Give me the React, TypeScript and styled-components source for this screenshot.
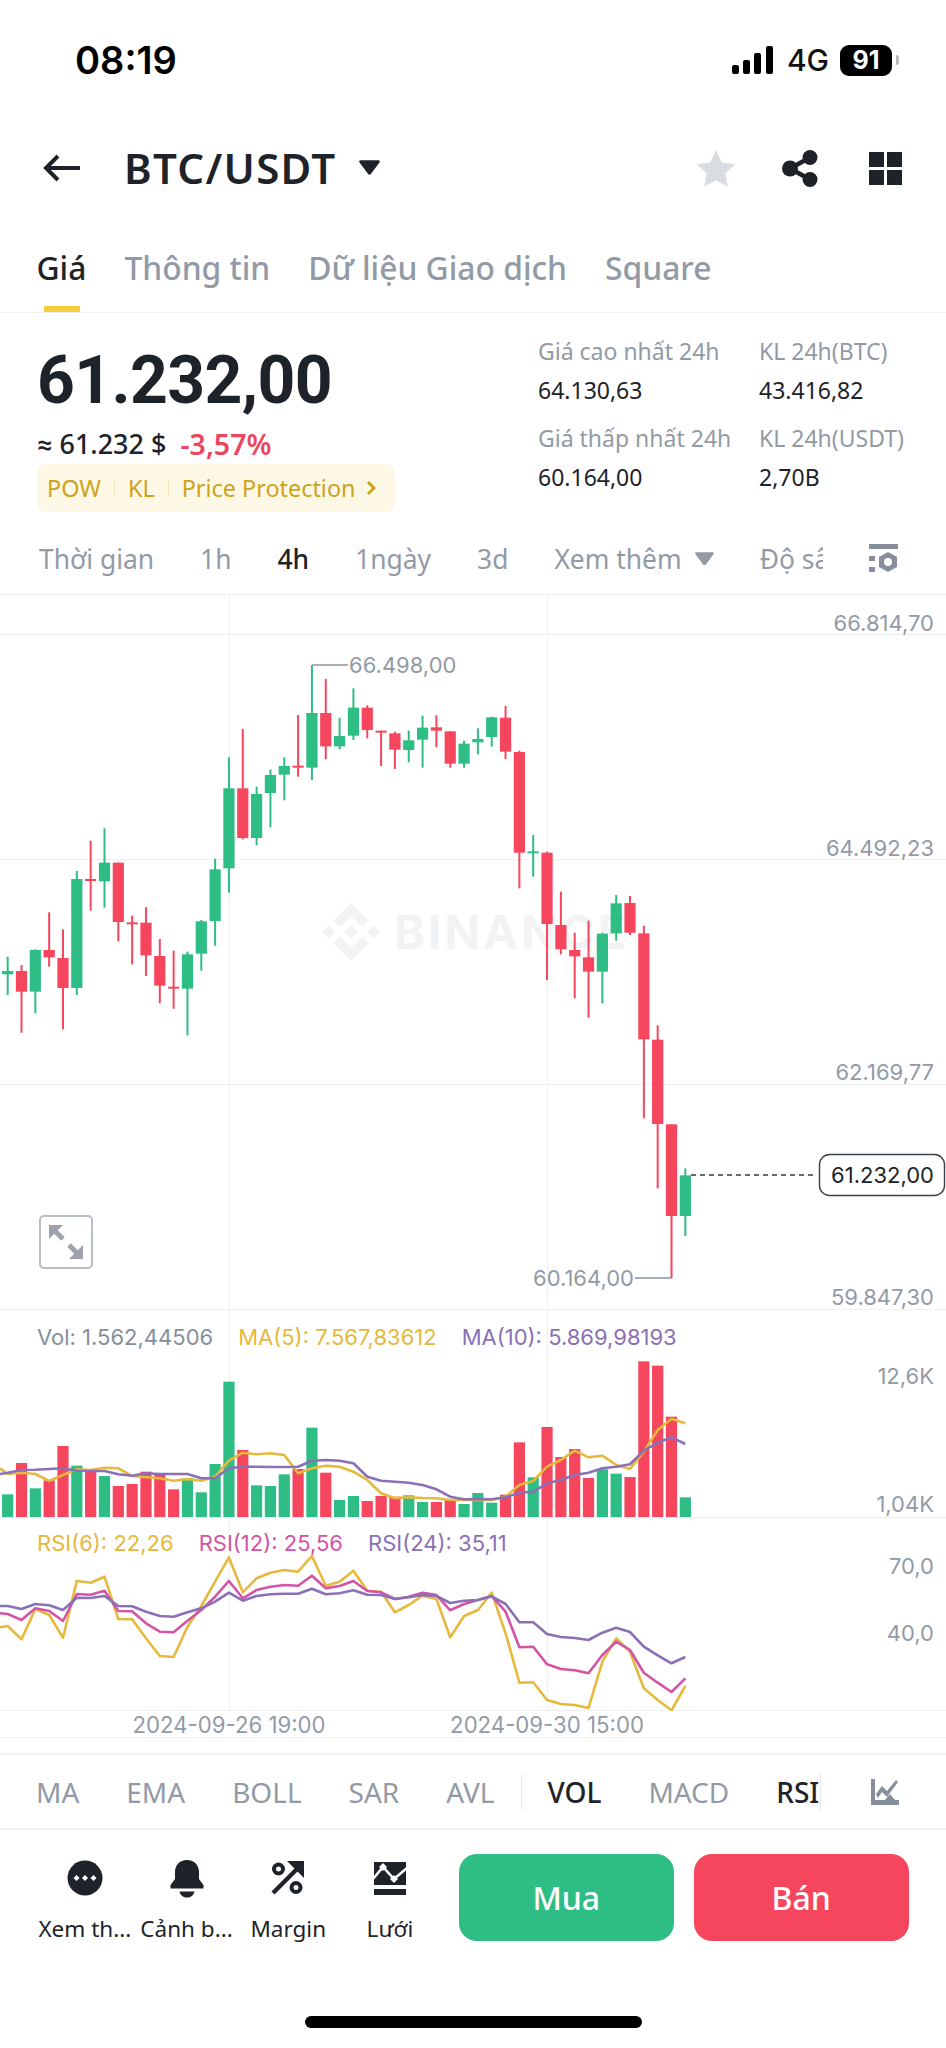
import * as React from "react";
import styled, { createGlobalStyle } from "styled-components";

const DARK = "#1e2329";
const GREY = "#929aa5";
const GREEN = "#2ebd85";
const RED = "#f6465d";
const GOLD = "#e6b83c";
const PINK = "#d154a6";
const PURPLE = "#8a70b6";
const UI_FONT = `"Noto Sans", Roboto, sans-serif`;
const CHART_FONT = `Inter, "Liberation Sans", sans-serif`;

const Global = createGlobalStyle`
html, body, #root {
  margin: 0;
  padding: 0;
  background: #fff;
}
`;

const Page = styled.div`
  width: 946px;
  height: 2048px;
  overflow: hidden;
  display: flex;
  flex-direction: column;
  background: #fff;
  color: ${DARK};
  font-family: ${UI_FONT};
`;

const StatusBar = styled.div`
  height: 120px;
  flex: none;
  display: flex;
  align-items: center;
  padding: 0 54px 0 75px;
`;

const Clock = styled.span`
  font-family: Inter, sans-serif;
  font-size: 38px;
  font-weight: 600;
  color: #000;
`;

const StatusRight = styled.div`
  margin-left: auto;
  display: flex;
  align-items: center;
`;

const Network = styled.span`
  font-family: Inter, sans-serif;
  font-size: 30px;
  font-weight: 500;
  color: #111;
  margin: 0 11px 0 13px;
`;

const Battery = styled.span`
  width: 52px;
  height: 31px;
  border-radius: 9px;
  background: #000;
  color: #fff;
  font-family: Inter, sans-serif;
  font-size: 25px;
  font-weight: 700;
  line-height: 31px;
  text-align: center;
  position: relative;
  &::after {
    content: "";
    position: absolute;
    right: -7px;
    top: 10px;
    width: 3px;
    height: 10px;
    border-radius: 0 3px 3px 0;
    background: #b5b8bc;
  }
`;

const Header = styled.div`
  height: 96px;
  flex: none;
  display: flex;
  align-items: center;
  padding: 0 44px 0 43px;
`;

const Title = styled.span`
  margin: 0 22px 0 44px;
  font-size: 42px;
  font-weight: 600;
  line-height: 48px;
  letter-spacing: 1.3px;
`;

const HeaderActions = styled.div`
  margin-left: auto;
  display: flex;
  align-items: center;
  gap: 47px;
  > :last-child {
    margin-left: 4px;
  }
`;

const Tabs = styled.div`
  height: 96px;
  flex: none;
  display: flex;
  gap: 38px;
  padding-left: 36.5px;
  border-bottom: 1px solid #eef0f2;
`;

const Tab = styled.div<{ $active?: boolean }>`
  position: relative;
  padding-top: 32px;
  font-size: 31.8px;
  line-height: 40px;
  font-weight: 500;
  color: ${(p) => (p.$active ? DARK : GREY)};
  &::after {
    content: "";
    display: ${(p) => (p.$active ? "block" : "none")};
    position: absolute;
    left: 7.5px;
    bottom: 0;
    width: 36px;
    height: 6px;
    background: #f5cf3a;
  }
`;

const Summary = styled.div`
  height: 212px;
  flex: none;
  display: flex;
`;

const PriceColumn = styled.div`
  width: 501px;
  padding-left: 37px;
  flex: none;
`;

const LastPrice = styled.div`
  margin-top: 28px;
  font-family: Roboto, sans-serif;
  font-size: 66px;
  line-height: 80px;
  font-weight: 700;
  letter-spacing: -0.6px;
`;

const SubPrice = styled.div`
  display: flex;
  gap: 14px;
  margin-top: 8px;
  font-size: 27px;
  line-height: 30px;
  font-weight: 500;
`;

const Change = styled.span`
  color: #e8485f;
  font-size: 28.5px;
  font-weight: 600;
`;

const Badge = styled.div`
  width: 358px;
  height: 48px;
  margin-top: 5px;
  padding-left: 10px;
  border-radius: 9px;
  background: #fdf8e6;
  color: #cda31c;
  font-size: 23.4px;
  display: flex;
  align-items: center;
  box-sizing: border-box;
`;

const BadgeDivider = styled.i`
  width: 1px;
  height: 20px;
  margin: 0 13px;
  background: #f0e4ba;
`;

const BadgeChevron = styled.span`
  display: flex;
  margin-left: 10px;
`;

const Stats = styled.div`
  display: grid;
  grid-template-columns: 221px auto;
  grid-template-rows: 30px 30px 30px 30px;
  grid-auto-flow: column;
  padding-top: 23px;
  row-gap: 9px;
`;

const StatLabel = styled.div<{ $second?: boolean }>`
  font-size: 23px;
  line-height: 30px;
  color: ${GREY};
  white-space: nowrap;
  transform: translateY(${(p) => (p.$second ? "9px" : "0")});
`;

const StatValue = styled.div<{ $second?: boolean }>`
  font-size: 23px;
  line-height: 30px;
  color: ${DARK};
  transform: translateY(${(p) => (p.$second ? "9px" : "0")});
`;

const Intervals = styled.div`
  height: 70px;
  flex: none;
  display: flex;
  align-items: center;
  gap: 46px;
  padding: 0 48px 2px 39px;
  border-bottom: 1px solid #eef0f2;
  box-sizing: border-box;
`;

const Interval = styled.span<{ $active?: boolean }>`
  flex: none;
  font-size: 26.4px;
  font-weight: ${(p) => (p.$active ? 500 : 400)};
  color: ${(p) => (p.$active ? DARK : GREY)};
  white-space: nowrap;
  display: flex;
  align-items: center;
  gap: 13px;
`;

const ClippedInterval = styled(Interval)`
  width: 63px;
  overflow: hidden;
`;

const IntervalTools = styled.div`
  margin-left: auto;
  display: flex;
`;

const ChartArea = styled.div`
  flex: none;
  height: 1143px;
  background:
    linear-gradient(#eef0f2, #eef0f2) 229px 0 / 1px 100% no-repeat,
    linear-gradient(#eef0f2, #eef0f2) 547px 0 / 1px 100% no-repeat;
`;

const PricePanel = styled.div`
  position: relative;
  height: 714px;
  border-bottom: 1px solid #eef0f2;
`;

const ChartSvg = styled.svg`
  display: block;
  overflow: visible;
`;

const AxisText = styled.text<{ $dark?: boolean }>`
  font-family: ${CHART_FONT};
  font-size: 22px;
  fill: ${(p) => (p.$dark ? DARK : GREY)};
`;

const WatermarkText = styled.text`
  font-family: ${CHART_FONT};
  font-size: 47px;
  font-weight: 700;
  letter-spacing: 3px;
  fill: #f1f3f5;
`;

const ExpandButton = styled.div`
  position: absolute;
  left: 39px;
  top: 620px;
  width: 54px;
  height: 54px;
  box-sizing: border-box;
  border: 2px solid #b7bdc6;
  border-radius: 5px;
  background: #fff;
  display: flex;
  align-items: center;
  justify-content: center;
`;

const Legend = styled.div<{ $height: number }>`
  height: ${(p) => p.$height}px;
  display: flex;
  align-items: flex-end;
  gap: 25px;
  padding-left: 37px;
  font-family: ${CHART_FONT};
  font-size: 22px;
  line-height: 26px;
`;

const LegendItem = styled.span<{ $color: string }>`
  color: ${(p) => p.$color};
  white-space: nowrap;
`;

const VolumePanel = styled.div`
  height: 207px;
  border-bottom: 1px solid #eef0f2;
`;

const VolumeSlot = styled.div`
  padding-top: 12px;
`;

const RsiPanel = styled.div`
  height: 192px;
  border-bottom: 1px solid #eef0f2;
`;

const DateAxis = styled.div`
  position: relative;
  height: 26px;
  border-bottom: 1px solid #eef0f2;
  background: #fff;
`;

const DateLabel = styled.span<{ $x: number }>`
  position: absolute;
  left: ${(p) => p.$x}px;
  top: 1px;
  transform: translateX(-50%);
  font-family: ${CHART_FONT};
  font-size: 22.2px;
  line-height: 26px;
  color: ${GREY};
  white-space: nowrap;
`;

const Indicators = styled.div`
  flex: none;
  height: 77px;
  margin-top: 15px;
  box-sizing: border-box;
  display: flex;
  align-items: center;
  gap: 47px;
  padding-left: 36px;
  border-top: 2px solid #f1f2f4;
  border-bottom: 2px solid #f1f2f4;
`;

const Indicator = styled.span<{ $active?: boolean }>`
  font-size: 28px;
  font-weight: ${(p) => (p.$active ? 500 : 400)};
  color: ${(p) => (p.$active ? DARK : GREY)};
`;

const IndicatorDivider = styled.i<{ $flush?: boolean }>`
  width: 1px;
  height: 36px;
  background: #e6e8ea;
  margin: ${(p) => (p.$flush ? "0 -2px 0 -46px" : "0 -21px")};
`;

const IndicatorTool = styled.span`
  display: flex;
  margin-left: 5px;
`;

const BottomBar = styled.div`
  flex: none;
  height: 186px;
  display: flex;
  padding-left: 34px;
`;

const Action = styled.div`
  width: 101.7px;
  padding-top: 30px;
  display: flex;
  flex-direction: column;
  align-items: center;
`;

const ActionIcon = styled.span`
  height: 38px;
  display: flex;
`;

const ActionLabel = styled.span`
  margin-top: 15px;
  font-size: 22.5px;
  line-height: 32px;
  white-space: nowrap;
`;

const TradeButtons = styled.div`
  display: flex;
  gap: 20px;
  margin: 24px 0 0 18px;
`;

const TradeButton = styled.div<{ $color: string }>`
  width: 215px;
  height: 87px;
  border-radius: 18px;
  background: ${(p) => p.$color};
  color: #fff;
  font-size: 32px;
  font-weight: 500;
  display: flex;
  align-items: center;
  justify-content: center;
`;

const HomeBar = styled.div`
  flex: none;
  width: 337px;
  height: 12px;
  margin: 0 auto;
  border-radius: 6px;
  background: #000;
`;

// candle values are [high, bodyTop, bodyBottom, low] read off the 3x crops
type Candle = [number, number, number, number, "g" | "r"];

const candles: Candle[] = [
  [1010, 1053, 1063, 1125, "g"], [1035, 1053, 1115, 1238, "r"], [988, 990, 1115, 1180, "g"],
  [877, 990, 1012, 1040, "r"], [928, 1014, 1104, 1228, "r"], [753, 777, 1104, 1125, "g"],
  [662, 777, 783, 872, "r"], [625, 728, 784, 863, "g"], [728, 728, 906, 964, "r"],
  [887, 907, 913, 1033, "r"], [862, 908, 1006, 1068, "r"], [957, 1008, 1097, 1150, "r"],
  [992, 1100, 1106, 1166, "r"], [995, 1003, 1106, 1246, "g"], [900, 904, 1001, 1052, "g"],
  [716, 748, 903, 977, "g"], [412, 505, 745, 818, "g"], [327, 505, 654, 658, "r"],
  [500, 522, 654, 676, "g"], [448, 465, 519, 622, "g"], [412, 438, 464, 541, "g"],
  [285, 437, 442, 470, "r"], [135, 279, 443, 480, "g"], [177, 279, 379, 418, "r"],
  [293, 348, 379, 388, "g"], [205, 263, 347, 360, "g"], [256, 263, 330, 355, "r"],
  [332, 332, 337, 438, "r"], [335, 340, 389, 447, "r"], [332, 361, 390, 427, "g"],
  [287, 323, 359, 443, "g"], [286, 322, 332, 382, "r"], [334, 334, 431, 443, "r"],
  [362, 371, 431, 443, "g"], [325, 357, 367, 403, "g"], [290, 292, 351, 380, "g"],
  [258, 293, 395, 417, "r"], [392, 396, 698, 805, "r"], [645, 694, 698, 770, "g"],
  [695, 698, 912, 1080, "r"], [815, 915, 988, 1003, "r"], [938, 990, 1009, 1135, "r"],
  [902, 1012, 1055, 1193, "r"], [938, 941, 1055, 1150, "g"], [825, 850, 940, 962, "g"],
  [828, 849, 938, 945, "r"], [917, 940, 1258, 1495, "r"], [1216, 1259, 1512, 1705, "r"],
  [1513, 1513, 1788, 1975, "r"], [1645, 1666, 1788, 1848, "g"],
];

const volumes = [
  583, 489, 565, 541, 438, 497, 510, 528, 558, 552, 515, 522, 568, 534, 577, 492, 245, 450, 556, 558, 523, 507, 383,
  518, 600, 588, 603, 588, 590, 586, 606, 606, 600, 612, 579, 608, 584, 427, 532, 381, 471, 447, 534, 508, 521, 531,
  184, 197, 350, 592,
];

const ma5 = [
  522, 518, 522, 543, 525, 508, 510, 503, 505, 528, 532, 535, 542, 537, 542, 530, 482, 458, 463, 460, 465, 520, 505,
  497, 500, 515, 540, 580, 595, 592, 594, 595, 600, 600, 600, 600, 590, 555, 543, 500, 480, 452, 472, 467, 495, 507,
  455, 390, 356, 370,
];

const ma10 = [
  518, 510, 509, 507, 505, 512, 513, 513, 523, 527, 520, 522, 522, 522, 535, 535, 505, 500, 500, 501, 501, 500, 482,
  480, 482, 490, 530, 542, 545, 548, 555, 568, 590, 598, 597, 598, 592, 578, 575, 550, 540, 525, 518, 505, 500, 493,
  452, 428, 412, 432,
];

const rsi6 = [
  288, 328, 237, 255, 323, 153, 158, 140, 267, 268, 325, 378, 381, 290, 228, 155, 82, 187, 145, 128, 120, 125, 78,
  167, 155, 122, 182, 185, 247, 225, 197, 207, 322, 258, 240, 188, 310, 458, 457, 510, 522, 525, 534, 395, 325, 365,
  475, 510, 541, 468,
];

const rsi12 = [
  252, 270, 235, 243, 273, 192, 194, 182, 243, 244, 280, 305, 307, 272, 240, 200, 153, 205, 180, 170, 165, 167, 137,
  175, 168, 153, 183, 187, 207, 200, 188, 195, 241, 222, 210, 198, 245, 352, 350, 403, 417, 421, 430, 375, 335, 360,
  428, 458, 486, 445,
];

const rsi24 = [
  228, 237, 222, 226, 240, 203, 204, 198, 228, 229, 245, 258, 260, 247, 235, 215, 188, 212, 198, 193, 191, 191, 176,
  193, 190, 181, 194, 195, 207, 202, 195, 198, 219, 212, 210, 199, 222, 277, 277, 312, 321, 324, 330, 308, 293, 306,
  350, 376, 400, 381,
];

const candleX = (i: number) => 7.67 + 13.83 * i;
const colorOf = (c: "g" | "r") => (c === "g" ? GREEN : RED);

const linePoints = (values: number[], toY: (z: number) => number, startZ?: number) => {
  const pts = values.map((z, i) => `${candleX(i).toFixed(1)},${toY(z).toFixed(1)}`);
  if (startZ !== undefined) pts.unshift(`0,${toY(startZ).toFixed(1)}`);
  return pts.join(" ");
};

const priceY = (z: number) => 25 + z / 3;

const PriceChart = () => (
  <ChartSvg width="946" height="714" viewBox="0 0 946 714">
    <line x1="0" x2="946" y1="39.5" y2="39.5" stroke="#eef0f2" />
    <line x1="0" x2="946" y1="264.5" y2="264.5" stroke="#eef0f2" />
    <line x1="0" x2="946" y1="489.5" y2="489.5" stroke="#eef0f2" />
    <g fill="#f1f3f5" transform="translate(322 308) scale(0.458)">
      <path d="M38.73 53.2l24.59-24.58 24.6 24.6 14.3-14.31L63.32 0 24.43 38.9l14.3 14.3zM0 63.31l14.3-14.31 14.31 14.31-14.31 14.3zM38.73 73.41l24.59 24.59 24.6-24.6 14.31 14.29-38.9 38.91-38.9-38.9-.01-.01 14.31-14.29zM98 63.31l14.3-14.31 14.31 14.3-14.31 14.32zM77.83 63.3L63.32 48.78 52.59 59.51l-1.24 1.23-2.54 2.54 14.51 14.5 14.51-14.47z" />
    </g>
    <WatermarkText x="394" y="354">BINANCE</WatermarkText>
    {candles.map(([h, t, b, l, c], i) => {
      const x = candleX(i);
      const top = priceY(t);
      return (
        <g key={i} fill={colorOf(c)}>
          <rect x={x - 1} y={priceY(h)} width="2" height={priceY(l) - priceY(h)} />
          <rect x={x - 5.6} y={top} width="11.2" height={Math.max(priceY(b) - top, 2)} />
        </g>
      );
    })}
    <line x1="312" x2="348" y1="70" y2="70" stroke="#8d949e" strokeWidth="1.3" />
    <AxisText x="349" y="77.5">66.498,00</AxisText>
    <line x1="635" x2="671" y1="683" y2="683" stroke="#8d949e" strokeWidth="1.3" />
    <AxisText x="634" y="691" textAnchor="end">60.164,00</AxisText>
    <line x1="691" x2="814" y1="580" y2="580" stroke="#333a42" strokeWidth="1.4" strokeDasharray="5 4" />
    <AxisText x="934" y="35.5" textAnchor="end">66.814,70</AxisText>
    <AxisText x="934" y="260.5" textAnchor="end">64.492,23</AxisText>
    <AxisText x="934" y="484.5" textAnchor="end">62.169,77</AxisText>
    <AxisText x="934" y="709.5" textAnchor="end">59.847,30</AxisText>
    <rect x="819.5" y="559.5" width="125" height="41" rx="10" fill="#fff" stroke="#3c424b" strokeWidth="1.4" />
    <AxisText x="934" y="588" textAnchor="end" $dark>61.232,00</AxisText>
  </ChartSvg>
);

// volume svg starts at y=1362 of the page, crop values are relative to y=1300
const volY = (z: number) => z / 3 - 62;

const VolumeChart = () => (
  <ChartSvg width="946" height="155" viewBox="0 0 946 155">
    {volumes.map((z, i) => (
      <rect
        key={i}
        x={candleX(i) - 5.6}
        y={volY(z)}
        width="11.2"
        height={155 - volY(z)}
        fill={colorOf(candles[i][4])}
      />
    ))}
    <polyline points={linePoints(ma5, volY, 505)} fill="none" stroke={GOLD} strokeWidth="2.6" strokeLinejoin="round" />
    <polyline points={linePoints(ma10, volY, 522)} fill="none" stroke={PURPLE} strokeWidth="2.6" strokeLinejoin="round" />
    <AxisText x="934" y="21.5" textAnchor="end">12,6K</AxisText>
    <AxisText x="934" y="149.5" textAnchor="end">1,04K</AxisText>
  </ChartSvg>
);

// rsi svg starts at y=1556 of the page, crop values are relative to y=1530
const rsiY = (z: number) => z / 3 - 26;

const RsiChart = () => (
  <ChartSvg width="946" height="154" viewBox="0 0 946 154">
    <polyline points={linePoints(rsi6, rsiY, 292)} fill="none" stroke={GOLD} strokeWidth="2.6" strokeLinejoin="round" />
    <polyline points={linePoints(rsi12, rsiY, 250)} fill="none" stroke={PINK} strokeWidth="2.6" strokeLinejoin="round" />
    <polyline points={linePoints(rsi24, rsiY, 228)} fill="none" stroke={PURPLE} strokeWidth="2.6" strokeLinejoin="round" />
    <AxisText x="934" y="17.5" textAnchor="end">70,0</AxisText>
    <AxisText x="934" y="84.5" textAnchor="end">40,0</AxisText>
  </ChartSvg>
);

const SignalIcon = () => (
  <svg width="42" height="28" viewBox="0 0 42 28" fill="#000">
    <rect x="0" y="19" width="7" height="9" rx="2" />
    <rect x="11" y="14" width="7" height="14" rx="2" />
    <rect x="22" y="7" width="7" height="21" rx="2" />
    <rect x="34" y="0" width="7" height="28" rx="2" />
  </svg>
);

const BackIcon = () => (
  <svg width="37" height="28" viewBox="0 0 37 28" fill="none" stroke={DARK} strokeWidth="4">
    <path d="M37 14H4M15 2 3 14l12 12" />
  </svg>
);

const Caret = ({ size, color }: { size: number; color: string }) => (
  <svg width={size} height={size * 0.72} viewBox="0 0 20 14" fill={color}>
    <path d="M1.5 0h17c1.2 0 1.8 1.2 1 2.2l-8.2 11c-.6.8-2 .8-2.6 0l-8.2-11C-.3 1.2.3 0 1.5 0z" />
  </svg>
);

const StarIcon = () => (
  <svg width="38" height="37" viewBox="0 0 38 37" fill="#d9dce0">
    <path d="M19 0l5.8 12.5 13.2 1.7-9.7 9.3 2.5 13.5L19 30.3 7.2 37l2.5-13.5L0 14.2l13.2-1.7z" />
  </svg>
);

const ShareIcon = () => (
  <svg width="36" height="37" viewBox="0 0 36 37" fill={DARK}>
    <circle cx="28" cy="7.5" r="7.5" />
    <circle cx="28" cy="29.5" r="7.5" />
    <circle cx="8" cy="18.5" r="8" />
    <path d="M8 18.5 28 7.5M8 18.5l20 11" stroke={DARK} strokeWidth="4.5" />
  </svg>
);

const LayoutIcon = () => (
  <svg width="33" height="33" viewBox="0 0 33 33" fill={DARK}>
    <rect x="0" y="0" width="15" height="15" />
    <rect x="18" y="0" width="15" height="15" />
    <rect x="0" y="18" width="15" height="15" />
    <rect x="18" y="18" width="15" height="15" />
  </svg>
);

const ChevronIcon = () => (
  <svg width="10" height="16" viewBox="0 0 10 16" fill="none" stroke="#cda31c" strokeWidth="3">
    <path d="M2 2l6 6-6 6" />
  </svg>
);

const ChartSettingsIcon = () => (
  <svg width="30" height="29" viewBox="0 0 30 29" fill="#848e9c">
    <rect x="0" y="0" width="29" height="5" />
    <rect x="0" y="12" width="6" height="5" />
    <rect x="0" y="23" width="6" height="5" />
    <path d="M19 8l9 5v10l-9 5-9-5V13z" />
    <circle cx="19" cy="18" r="4" fill="#fff" />
  </svg>
);

const ExpandIcon = () => (
  <svg width="34" height="34" viewBox="0 0 34 34" fill="#9da3ad">
    <path d="M0 0h14L0 14z" />
    <path d="M5 5l9 9" stroke="#9da3ad" strokeWidth="5" />
    <path d="M34 34H20l14-14z" />
    <path d="M29 29l-9-9" stroke="#9da3ad" strokeWidth="5" />
  </svg>
);

const IndicatorChartIcon = () => (
  <svg width="28" height="26" viewBox="0 0 28 26" fill="#848e9c">
    <path d="M0 0h4v21h24v5H0z" />
    <path d="M5 15l6-8 5 5 9-11 2 2-11 15-5-5-4 6z" />
    <path d="M14 21l5-6 5 6z" />
  </svg>
);

const MoreIcon = () => (
  <svg width="36" height="36" viewBox="0 0 36 36">
    <circle cx="18" cy="18" r="17.5" fill={DARK} />
    <g fill="#fff">
      <path d="M9.5 15l3 3-3 3-3-3z" />
      <path d="M18 15l3 3-3 3-3-3z" />
      <path d="M26.5 15l3 3-3 3-3-3z" />
    </g>
  </svg>
);

const BellIcon = () => (
  <svg width="36" height="38" viewBox="0 0 36 38" fill={DARK}>
    <path d="M18 0c7.5 0 12 5.5 12 12v7l4.5 6v3.5h-33V25L6 19v-7C6 5.5 10.5 0 18 0z" />
    <path d="M10.5 31.5h15C24.5 35.5 21.5 37.5 18 37.5s-6.5-2-7.5-6z" />
  </svg>
);

const MarginIcon = () => (
  <svg width="36" height="36" viewBox="0 0 36 36" fill="none" stroke={DARK} strokeWidth="4">
    <circle cx="8.5" cy="9" r="4.5" />
    <circle cx="26" cy="27.5" r="4.5" />
    <path d="M3 33 31 5" strokeWidth="4.5" />
    <path d="M17 1h17v17z" fill={DARK} stroke="none" />
  </svg>
);

const GridIcon = () => (
  <svg width="36" height="36" viewBox="0 0 36 36">
    <rect x="2" y="2" width="32" height="23" fill={DARK} />
    <polyline points="1,19 11,7 22,19 35,8" fill="none" stroke="#fff" strokeWidth="2.5" />
    <path d="M11 3l4 4-4 4-4-4zM22 15l4 4-4 4-4-4z" fill="#fff" />
    <rect x="2" y="29" width="32" height="6" fill={DARK} />
  </svg>
);

const App = () => (
  <Page>
    <Global />
    <StatusBar>
      <Clock>08:19</Clock>
      <StatusRight>
        <SignalIcon />
        <Network>4G</Network>
        <Battery>91</Battery>
      </StatusRight>
    </StatusBar>
    <Header>
      <BackIcon />
      <Title>BTC/USDT</Title>
      <Caret size={21} color={DARK} />
      <HeaderActions>
        <StarIcon />
        <ShareIcon />
        <LayoutIcon />
      </HeaderActions>
    </Header>
    <Tabs>
      <Tab $active>Giá</Tab>
      <Tab>Thông tin</Tab>
      <Tab>Dữ liệu Giao dịch</Tab>
      <Tab>Square</Tab>
    </Tabs>
    <Summary>
      <PriceColumn>
        <LastPrice>61.232,00</LastPrice>
        <SubPrice>
          <span>≈ 61.232 $</span>
          <Change>-3,57%</Change>
        </SubPrice>
        <Badge>
          POW
          <BadgeDivider />
          KL
          <BadgeDivider />
          Price Protection
          <BadgeChevron>
            <ChevronIcon />
          </BadgeChevron>
        </Badge>
      </PriceColumn>
      <Stats>
        <StatLabel>Giá cao nhất 24h</StatLabel>
        <StatValue>64.130,63</StatValue>
        <StatLabel $second>Giá thấp nhất 24h</StatLabel>
        <StatValue $second>60.164,00</StatValue>
        <StatLabel>KL 24h(BTC)</StatLabel>
        <StatValue>43.416,82</StatValue>
        <StatLabel $second>KL 24h(USDT)</StatLabel>
        <StatValue $second>2,70B</StatValue>
      </Stats>
    </Summary>
    <Intervals>
      <Interval>Thời gian</Interval>
      <Interval>1h</Interval>
      <Interval $active>4h</Interval>
      <Interval>1ngày</Interval>
      <Interval>3d</Interval>
      <Interval>
        Xem thêm
        <Caret size={19} color="#929aa5" />
      </Interval>
      <ClippedInterval>Độ sâu</ClippedInterval>
      <IntervalTools>
        <ChartSettingsIcon />
      </IntervalTools>
    </Intervals>
    <ChartArea>
      <PricePanel>
        <PriceChart />
        <ExpandButton>
          <ExpandIcon />
        </ExpandButton>
      </PricePanel>
      <VolumePanel>
        <Legend $height={40}>
          <LegendItem $color="#848e9c">Vol: 1.562,44506</LegendItem>
          <LegendItem $color={GOLD}>MA(5): 7.567,83612</LegendItem>
          <LegendItem $color={PURPLE}>MA(10): 5.869,98193</LegendItem>
        </Legend>
        <VolumeSlot>
          <VolumeChart />
        </VolumeSlot>
      </VolumePanel>
      <RsiPanel>
        <Legend $height={38}>
          <LegendItem $color={GOLD}>RSI(6): 22,26</LegendItem>
          <LegendItem $color={PINK}>RSI(12): 25,56</LegendItem>
          <LegendItem $color={PURPLE}>RSI(24): 35,11</LegendItem>
        </Legend>
        <RsiChart />
      </RsiPanel>
      <DateAxis>
        <DateLabel $x={229}>2024-09-26 19:00</DateLabel>
        <DateLabel $x={547}>2024-09-30 15:00</DateLabel>
      </DateAxis>
    </ChartArea>
    <Indicators>
      <Indicator>MA</Indicator>
      <Indicator>EMA</Indicator>
      <Indicator>BOLL</Indicator>
      <Indicator>SAR</Indicator>
      <Indicator>AVL</Indicator>
      <IndicatorDivider />
      <Indicator $active>VOL</Indicator>
      <Indicator>MACD</Indicator>
      <Indicator $active>RSI</Indicator>
      <IndicatorDivider $flush />
      <IndicatorTool>
        <IndicatorChartIcon />
      </IndicatorTool>
    </Indicators>
    <BottomBar>
      <Action>
        <ActionIcon>
          <MoreIcon />
        </ActionIcon>
        <ActionLabel>Xem th...</ActionLabel>
      </Action>
      <Action>
        <ActionIcon>
          <BellIcon />
        </ActionIcon>
        <ActionLabel>Cảnh b...</ActionLabel>
      </Action>
      <Action>
        <ActionIcon>
          <MarginIcon />
        </ActionIcon>
        <ActionLabel>Margin</ActionLabel>
      </Action>
      <Action>
        <ActionIcon>
          <GridIcon />
        </ActionIcon>
        <ActionLabel>Lưới</ActionLabel>
      </Action>
      <TradeButtons>
        <TradeButton $color={GREEN}>Mua</TradeButton>
        <TradeButton $color={RED}>Bán</TradeButton>
      </TradeButtons>
    </BottomBar>
    <HomeBar />
  </Page>
);

export default App;
